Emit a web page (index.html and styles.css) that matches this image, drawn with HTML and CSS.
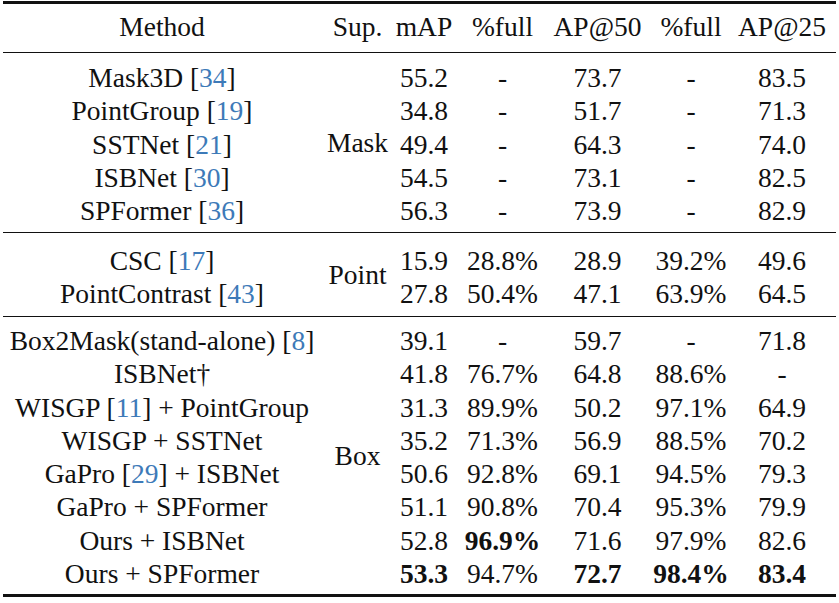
FILE: index.html
```html
<!DOCTYPE html>
<html lang="en">
<head>
<meta charset="utf-8">
<title>Results table</title>
<link rel="stylesheet" href="styles.css">
</head>
<body>
<div class="wrap">
<table class="results">
  <colgroup>
    <col class="c-method"><col class="c-sup"><col class="c-map"><col class="c-full1"><col class="c-ap50"><col class="c-full2"><col class="c-ap25">
  </colgroup>
  <thead>
    <tr><th>Method</th><th>Sup.</th><th>mAP</th><th>%full</th><th>AP@50</th><th class="f2">%full</th><th class="last">AP@25</th></tr>
  </thead>
  <tbody class="sec sec-mask">
    <tr class="first"><td>Mask3D [<span class="cite">34</span>]</td><td class="sup" rowspan="5">Mask</td><td>55.2</td><td>-</td><td>73.7</td><td class="f2">-</td><td class="last">83.5</td></tr>
    <tr><td>PointGroup [<span class="cite">19</span>]</td><td>34.8</td><td>-</td><td>51.7</td><td class="f2">-</td><td class="last">71.3</td></tr>
    <tr><td>SSTNet [<span class="cite">21</span>]</td><td>49.4</td><td>-</td><td>64.3</td><td class="f2">-</td><td class="last">74.0</td></tr>
    <tr><td>ISBNet [<span class="cite">30</span>]</td><td>54.5</td><td>-</td><td>73.1</td><td class="f2">-</td><td class="last">82.5</td></tr>
    <tr class="lastrow"><td>SPFormer [<span class="cite">36</span>]</td><td>56.3</td><td>-</td><td>73.9</td><td class="f2">-</td><td class="last">82.9</td></tr>
  </tbody>
  <tbody class="sec sec-point ruled">
    <tr class="first"><td>CSC [<span class="cite">17</span>]</td><td class="sup" rowspan="2">Point</td><td>15.9</td><td>28.8%</td><td>28.9</td><td class="f2">39.2%</td><td class="last">49.6</td></tr>
    <tr class="lastrow"><td>PointContrast [<span class="cite">43</span>]</td><td>27.8</td><td>50.4%</td><td>47.1</td><td class="f2">63.9%</td><td class="last">64.5</td></tr>
  </tbody>
  <tbody class="sec sec-box ruled">
    <tr class="first"><td>Box2Mask(stand-alone) [<span class="cite">8</span>]</td><td class="sup" rowspan="8">Box</td><td>39.1</td><td>-</td><td>59.7</td><td class="f2">-</td><td class="last">71.8</td></tr>
    <tr><td>ISBNet†</td><td>41.8</td><td>76.7%</td><td>64.8</td><td class="f2">88.6%</td><td class="last">-</td></tr>
    <tr><td>WISGP [<span class="cite">11</span>] + PointGroup</td><td>31.3</td><td>89.9%</td><td>50.2</td><td class="f2">97.1%</td><td class="last">64.9</td></tr>
    <tr><td>WISGP + SSTNet</td><td>35.2</td><td>71.3%</td><td>56.9</td><td class="f2">88.5%</td><td class="last">70.2</td></tr>
    <tr><td>GaPro [<span class="cite">29</span>] + ISBNet</td><td>50.6</td><td>92.8%</td><td>69.1</td><td class="f2">94.5%</td><td class="last">79.3</td></tr>
    <tr><td>GaPro + SPFormer</td><td>51.1</td><td>90.8%</td><td>70.4</td><td class="f2">95.3%</td><td class="last">79.9</td></tr>
    <tr><td>Ours + ISBNet</td><td>52.8</td><td><b>96.9%</b></td><td>71.6</td><td class="f2">97.9%</td><td class="last">82.6</td></tr>
    <tr class="lastrow"><td>Ours + SPFormer</td><td><b>53.3</b></td><td>94.7%</td><td><b>72.7</b></td><td class="f2"><b>98.4%</b></td><td class="last"><b>83.4</b></td></tr>
  </tbody>
</table>
</div>
</body>
</html>
```
FILE: styles.css
```css
html, body {
  margin: 0;
  padding: 0;
  background: #ffffff;
}

.wrap {
  padding: 1px 3px 0 3px;
  font-family: "Liberation Serif", "Times New Roman", serif;
}

.results {
  width: 833px;
  table-layout: fixed;
  border-collapse: separate;
  border-spacing: 0;
  border-top: 3px solid #111;
  border-bottom: 3px solid #111;
  font-family: "Liberation Serif", "Times New Roman", serif;
  font-size: 27.5px;
  line-height: 33.3px;
  color: #111;
}

.c-method { width: 318px; }
.c-sup { width: 73px; }
.c-map { width: 60px; }
.c-full1 { width: 97px; }
.c-ap50 { width: 93px; }
.c-full2 { width: 94px; }
.c-ap25 { width: 98px; }

.results th,
.results td {
  padding: 0;
  text-align: center;
  vertical-align: middle;
  white-space: nowrap;
  font-weight: normal;
}

.results th.last,
.results td.last {
  padding-right: 10px;
}

.results thead th {
  padding-top: 6.1px;
  padding-bottom: 8.6px;
  border-bottom: 1.5px solid #111;
}

.results thead th.last {
  padding-right: 10px;
}

.results b {
  font-weight: bold;
}

.cite {
  color: #3d7ab8;
}

/* section spacing */
.sec-mask tr.first td { padding-top: 8px; }
.sec-mask tr.lastrow td { padding-bottom: 5px; }

.sec-point tr.first td { padding-top: 10.5px; }
.sec-point tr.lastrow td { padding-bottom: 5.4px; }

.sec-box tr.first td { padding-top: 7px; }
.sec-box tr.lastrow td { padding-bottom: 4.1px; }

.ruled tr.first td {
  border-top: 1.5px solid #111;
}

.results tbody tr td.sup {
  padding-top: 0;
  padding-bottom: 0;
}
```
